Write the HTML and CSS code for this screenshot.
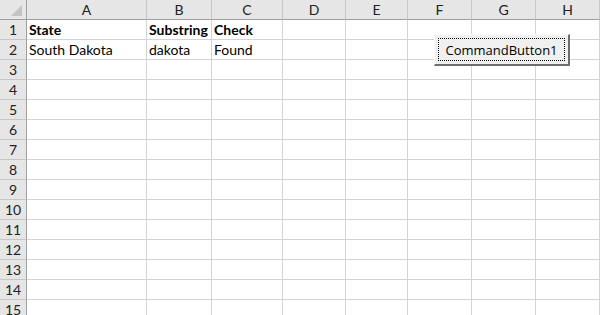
FILE: index.html
```html
<!DOCTYPE html>
<html lang="en">
<head>
  <title>Sheet1</title>
  <link rel="stylesheet" href="styles.css">
</head>
<body>

<div id="wrapper">
  <div class="sheet">
    <div class="corner"><span class="tri"></span></div>
    <div class="colhead">A</div>
    <div class="colhead">B</div>
    <div class="colhead">C</div>
    <div class="colhead">D</div>
    <div class="colhead">E</div>
    <div class="colhead">F</div>
    <div class="colhead">G</div>
    <div class="colhead">H</div>

    <div class="rowhead">1</div>
    <div class="cell bold">State</div>
    <div class="cell bold">Substring</div>
    <div class="cell bold">Check</div>
    <div class="cell"></div><div class="cell"></div><div class="cell"></div><div class="cell"></div><div class="cell"></div>

    <div class="rowhead">2</div>
    <div class="cell">South Dakota</div>
    <div class="cell">dakota</div>
    <div class="cell">Found</div>
    <div class="cell"></div><div class="cell"></div><div class="cell"></div><div class="cell"></div><div class="cell"></div>
  </div>

  <button class="cmd" type="button"><span class="focus">CommandButton1</span></button>
</div>

<script>
  // fill the empty rows 3..15
  var sheet = document.querySelector(".sheet");
  for (var r = 3; r <= 15; r++) {
    var h = document.createElement("div");
    h.className = "rowhead";
    h.textContent = r;
    sheet.appendChild(h);
    for (var c = 0; c < 8; c++) {
      var d = document.createElement("div");
      d.className = "cell";
      sheet.appendChild(d);
    }
  }
</script>

</body>
</html>
```

FILE: styles.css
```css
* {
  box-sizing: border-box;
}

body {
  margin: 0;
  padding: 0;
  background-color: #fff;
  overflow: hidden;
}

#wrapper {
  position: relative;
  width: 600px;
  height: 315px;
  overflow: hidden;
}

.sheet {
  display: grid;
  grid-template-columns: 27px 120px 65px 71px 63px 62px 64px 64px 64px;
  grid-auto-rows: 20px;
  font-family: Lato, "Liberation Sans", sans-serif;
  font-size: 14px;
  color: #000;
}

.corner,
.colhead {
  background-color: #e6e6e6;
  border-right: 1px solid #c6c6c6;
  border-bottom: 1px solid #9e9e9e;
}

.corner {
  position: relative;
  border-right-color: #9e9e9e;
}
.corner .tri {
  position: absolute;
  right: 4px;
  bottom: 3px;
  width: 0;
  height: 0;
  border-left: 11px solid transparent;
  border-bottom: 11px solid #c4c4c4;
}

.colhead {
  text-align: center;
  line-height: 19px;
  color: #222;
}

.rowhead {
  background-color: #e6e6e6;
  border-right: 1px solid #9e9e9e;
  border-bottom: 1px solid #c6c6c6;
  text-align: center;
  line-height: 20px;
  color: #222;
}

.cell {
  border-right: 1px solid #d4d4d4;
  border-bottom: 1px solid #d4d4d4;
  padding: 0 2px;
  line-height: 20px;
  white-space: nowrap;
  overflow: visible;
}
.bold {
  font-weight: bold;
}

.cmd {
  position: absolute;
  left: 434px;
  top: 34px;
  width: 136px;
  height: 32px;
  margin: 0;
  padding: 3px;
  background-color: #f0f0f0;
  border-top: 1px solid #fff;
  border-left: 1px solid #fff;
  border-right: 2px solid #6e6e6e;
  border-bottom: 2px solid #6e6e6e;
  font-family: "Open Sans", "Liberation Sans", sans-serif;
  font-size: 13px;
  color: #000;
}
.cmd .focus {
  display: block;
  height: 100%;
  border: 1px dotted #000;
  line-height: 23px;
}
```
